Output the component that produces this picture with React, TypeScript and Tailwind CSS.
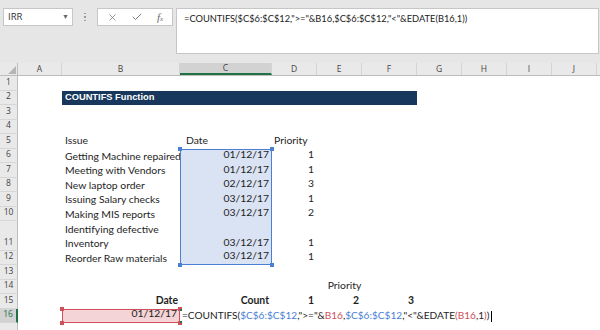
import { X, Check } from "lucide-react";
import type { ReactNode } from "react";

const cellFont = "font-[Lato,'Carlito',sans-serif] text-[10.4px] text-[#1e1e1e]";

const RowHead = ({ n, active }: { n?: number; active?: boolean }) => (
  <div
    className={`w-[18px] shrink-0 flex items-end justify-center pb-[1px] border-b border-[#d6d6d6] font-['Open_Sans',sans-serif] text-[8.5px] ${
      active
        ? "bg-[#d2d2d2] border-r-2 border-r-[#217346] text-[#217346]"
        : "bg-[#e9e9e9] border-r border-r-[#bdbdbd] text-[#444]"
    }`}
  >
    {n}
  </div>
);

const Row = ({
  n,
  h = "h-[14.5px]",
  active,
  children,
}: {
  n?: number;
  h?: string;
  active?: boolean;
  children?: ReactNode;
}) => (
  <div className={`flex shrink-0 ${h}`}>
    <RowHead n={n} active={active} />
    <div className="w-[44px] shrink-0" />
    {children}
    <div className="flex-1" />
  </div>
);

const Corner = ({ pos, color }: { pos: string; color: string }) => (
  <span className={`absolute size-[4px] ${pos} ${color}`} />
);

const rows = [
  { n: 6, issue: ["Getting Machine repaired"], date: "01/12/17", p: 1 },
  { n: 7, issue: ["Meeting with Vendors"], date: "01/12/17", p: 1 },
  { n: 8, issue: ["New laptop order"], date: "02/12/17", p: 3 },
  { n: 9, issue: ["Issuing Salary checks"], date: "03/12/17", p: 1 },
  { n: 10, issue: ["Making MIS reports"], date: "03/12/17", p: 2 },
  { n: 11, issue: ["Identifying defective", "Inventory"], date: "03/12/17", p: 1 },
  { n: 12, issue: ["Reorder Raw materials"], date: "03/12/17", p: 1 },
];

const headers = [
  { l: "A", w: "w-[44px]" },
  { l: "B", w: "w-[118px]" },
  { l: "C", w: "w-[92px]", active: true },
  { l: "D", w: "w-[45px]" },
  { l: "E", w: "w-[45px]" },
  { l: "F", w: "w-[55px]" },
  { l: "G", w: "w-[45px]" },
  { l: "H", w: "w-[45px]" },
  { l: "I", w: "w-[45px]" },
  { l: "J", w: "w-[45px]" },
];

const blue = "text-[#4a7fd4]";
const red = "text-[#d0505a]";

export default function App() {
  return (
    <div className="w-[600px] h-[330px] overflow-hidden bg-white flex flex-col">
      {/* formula toolbar */}
      <div className="h-[63px] shrink-0 bg-[#e6e6e6] flex items-start pt-[8px] pl-[3px] font-['Open_Sans',sans-serif]">
        <div className="w-[70px] h-[18px] bg-white border border-[#c6c6c6] flex items-center justify-between pl-[4px] pr-[3px] text-[9.5px] text-[#333]">
          <span>IRR</span>
          <span className="text-[7px] text-[#666]">▼</span>
        </div>
        <div className="w-[24px] h-[18px] flex flex-col items-center justify-center gap-[2px]">
          <span className="size-[1.5px] bg-[#9a9a9a]" />
          <span className="size-[1.5px] bg-[#9a9a9a]" />
          <span className="size-[1.5px] bg-[#9a9a9a]" />
        </div>
        <div className="w-[76px] h-[18px] bg-white border border-[#c6c6c6] flex items-center justify-around px-[2px] text-[#6b6b6b]">
          <X size={11} strokeWidth={1.5} />
          <Check size={12} strokeWidth={1.8} />
          <span className="font-['Liberation_Serif',serif] italic text-[11px] leading-none">
            f<span className="text-[7px]">x</span>
          </span>
        </div>
        <div className="flex-1 ml-[3px] mr-[1px] h-[46px] bg-white border border-[#c6c6c6] pl-[7px] pt-[3px] font-[Lato,sans-serif] text-[9.3px] text-[#222] whitespace-nowrap">
          =COUNTIFS($C$6:$C$12,"&gt;="&amp;B16,$C$6:$C$12,"&lt;"&amp;EDATE(B16,1))
        </div>
      </div>

      {/* column headers */}
      <div className="flex h-[13px] shrink-0 bg-[#e9e9e9] border-b border-[#bdbdbd] font-['Open_Sans',sans-serif] text-[8.5px] text-[#444]">
        <div className="w-[18px] shrink-0 border-r border-[#bdbdbd] flex items-end justify-end p-[1px]">
          <div className="w-0 h-0 border-l-[8px] border-l-transparent border-b-[8px] border-b-[#b5b5b5]" />
        </div>
        {headers.map((h) => (
          <div
            key={h.l}
            className={`${h.w} shrink-0 flex items-center justify-center border-r border-[#d4d4d4] ${
              h.active ? "bg-[#d2d2d2] border-b-2 border-b-[#217346]" : ""
            }`}
          >
            {h.l}
          </div>
        ))}
        <div className="flex-1" />
      </div>

      {/* sheet */}
      <div className={`flex flex-col ${cellFont}`}>
        <Row n={1} />
        <Row n={2}>
          <div className="w-[355px] shrink-0 bg-[#17375d] flex items-center pl-[3px] font-['Liberation_Sans',Arial,sans-serif] font-bold text-[9.3px] text-white">
            COUNTIFS Function
          </div>
        </Row>
        <Row n={3} />
        <Row n={4} />
        <Row n={5}>
          <div className="w-[118px] shrink-0 flex items-end pl-[3px]">Issue</div>
          <div className="w-[92px] shrink-0 flex items-end pl-[6px]">Date</div>
          <div className="w-[45px] shrink-0 flex items-end pl-[2px]">Priority</div>
        </Row>
        {rows.map((r, i) => {
          const first = i === 0;
          const last = i === rows.length - 1;
          return (
            <Row key={r.n} n={r.n} h={r.issue.length > 1 ? "h-[29.5px]" : "h-[14.5px]"}>
              <div className="w-[118px] shrink-0 flex flex-col justify-end pl-[3px] overflow-hidden whitespace-nowrap leading-[14.5px]">
                {r.issue.map((t) => (
                  <div key={t}>{t}</div>
                ))}
              </div>
              <div
                className={`relative w-[92px] shrink-0 bg-[#dae3f3] border-x border-[#4a7fd4] flex items-end justify-end pr-[2px] ${
                  first ? "border-t" : ""
                } ${last ? "border-b" : ""}`}
              >
                {r.date}
                {first && <Corner pos="-left-[3px] -top-[3px]" color="bg-[#4a7fd4]" />}
                {first && <Corner pos="-right-[3px] -top-[3px]" color="bg-[#4a7fd4]" />}
                {last && <Corner pos="-left-[3px] -bottom-[3px]" color="bg-[#4a7fd4]" />}
                {last && <Corner pos="-right-[3px] -bottom-[3px]" color="bg-[#4a7fd4]" />}
              </div>
              <div className="w-[45px] shrink-0 flex items-end justify-end pr-[3px]">{r.p}</div>
            </Row>
          );
        })}
        <Row n={13} />
        <Row n={14}>
          <div className="w-[118px] shrink-0" />
          <div className="w-[92px] shrink-0" />
          <div className="w-[145px] shrink-0 flex items-end justify-center">Priority</div>
        </Row>
        <Row n={15}>
          <div className="w-[118px] shrink-0 flex items-end justify-end pr-[2px] font-bold">Date</div>
          <div className="w-[92px] shrink-0 flex items-end justify-end pr-[3px] font-bold">Count</div>
          <div className="w-[45px] shrink-0 flex items-end justify-end pr-[3px] font-bold">1</div>
          <div className="w-[45px] shrink-0 flex items-end justify-end pr-[3px] font-bold">2</div>
          <div className="w-[55px] shrink-0 flex items-end justify-end pr-[3px] font-bold">3</div>
        </Row>
        <Row n={16} active>
          <div className="relative w-[118px] shrink-0 bg-[#f4d4d6] border border-[#d0505a] flex items-end justify-end pr-[2px]">
            01/12/17
            <Corner pos="-left-[3px] -top-[3px]" color="bg-[#d0505a]" />
            <Corner pos="-right-[3px] -top-[3px]" color="bg-[#d0505a]" />
            <Corner pos="-left-[3px] -bottom-[3px]" color="bg-[#d0505a]" />
            <Corner pos="-right-[3px] -bottom-[3px]" color="bg-[#d0505a]" />
          </div>
          <div className="relative z-10 w-[92px] shrink-0 border-y-2 border-[#217346] flex items-center pl-[2px] whitespace-nowrap">
            <span className="bg-white text-[10.1px]">
              =COUNTIFS(<span className={blue}>$C$6:$C$12</span>,"&gt;="&amp;
              <span className={red}>B16</span>,<span className={blue}>$C$6:$C$12</span>,"&lt;"&amp;EDATE
              <span className={red}>(B16</span>,1<span className={red}>)</span>)
              <span className="inline-block w-[1px] h-[11px] bg-black align-middle ml-[1px]" />
            </span>
          </div>
        </Row>
        <Row />
      </div>
    </div>
  );
}
